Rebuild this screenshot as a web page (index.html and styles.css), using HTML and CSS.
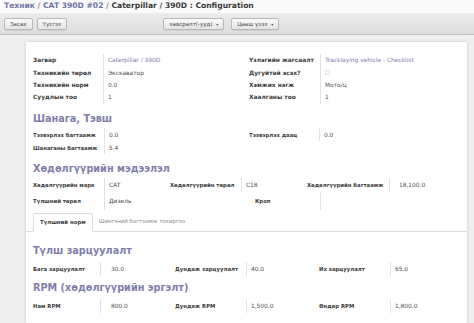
FILE: index.html
```html
<!DOCTYPE html>
<html lang="mn">
<head>
<meta charset="utf-8">
<title>Configuration</title>
<link rel="stylesheet" href="styles.css">
</head>
<body>
<div class="titlebar">
  <a class="crumb">Техник</a><span class="slash"> / </span><a class="crumb">CAT 390D #02</a><span class="slash"> / </span><span class="current">Caterpillar / 390D : Configuration</span>
</div>
<div class="toolbar">
  <div class="btns">
    <button class="btn">Засах</button>
    <button class="btn">Үүсгэх</button>
  </div>
  <div class="btns btns-right">
    <button class="btn">хавсралт(-ууд) <span class="caret">▾</span></button>
    <button class="btn">Цааш үзэх <span class="caret">▾</span></button>
  </div>
</div>
<div class="main">
  <div class="sheet">
    <div class="grid g2 g-first">
      <div class="lbl">Загвар</div><div class="val link">Caterpillar / 390D</div>
      <div class="lbl">Үзлэгийн жагсаалт</div><div class="val link">Tracklaying vehicle - Checklist</div>
      <div class="lbl">Техникийн төрөл</div><div class="val">Экскаватор</div>
      <div class="lbl">Дугуйтай эсэх?</div><div class="val"><span class="checkbox"></span></div>
      <div class="lbl">Техникийн норм</div><div class="val">0.0</div>
      <div class="lbl">Хэмжих нэгж</div><div class="val">Мото/ц</div>
      <div class="lbl">Суудлын тоо</div><div class="val">1</div>
      <div class="lbl">Хаалганы тоо</div><div class="val">1</div>
    </div>

    <h2 class="sep h-1">Шанага, Тэвш</h2>
    <div class="grid g2b">
      <div class="lbl sm">Тээвэрлэх багтаамж</div><div class="val">0.0</div>
      <div class="lbl sm">Тээвэрлэх даац</div><div class="val">0.0</div>
      <div class="lbl sm">Шанаганы багтаамж</div><div class="val">5.4</div>
      <div class="empty"></div><div class="empty"></div>
    </div>

    <h2 class="sep h-2">Хөдөлгүүрийн мэдээлэл</h2>
    <div class="grid g3a">
      <div class="lbl sm">Хөдөлгүүрийн марк</div><div class="val">CAT</div>
      <div class="lbl sm">Хөдөлгүүрийн төрөл</div><div class="val">C18</div>
      <div class="lbl sm">Хөдөлгүүрийн багтаамж</div><div class="val val-wide">18,100.0</div>
    </div>
    <div class="grid g3b">
      <div class="lbl sm">Түлшний төрөл</div><div class="val">Дизель</div>
      <div class="lbl sm lbl-in">Кроп</div><div class="val"></div>
    </div>

    <div class="tabs">
      <div class="tab active">Түлшний норм</div>
      <div class="tab">Шингэний багтаамж тохиргоо</div>
    </div>

    <h2 class="sep h-3">Түлш зарцуулалт</h2>
    <div class="grid g3c">
      <div class="lbl sm">Бага зарцуулалт</div><div class="val val-first">30.0</div>
      <div class="lbl sm">Дундаж зарцуулалт</div><div class="val">40.0</div>
      <div class="lbl sm">Их зарцуулалт</div><div class="val">65.0</div>
    </div>

    <h2 class="sep h-4">RPM (хөдөлгүүрийн эргэлт)</h2>
    <div class="grid g3c">
      <div class="lbl sm">Нам RPM</div><div class="val val-first">800.0</div>
      <div class="lbl sm">Дундаж RPM</div><div class="val">1,500.0</div>
      <div class="lbl sm">Өндөр RPM</div><div class="val">1,800.0</div>
    </div>
  </div>
</div>
</body>
</html>
```
FILE: styles.css
```css
* { box-sizing: border-box; }
html, body { margin: 0; padding: 0; }
body {
  background: #efefef;
  font-family: "DejaVu Sans", Verdana, sans-serif;
  color: #4c4c4c;
  width: 474px;
  height: 323px;
  overflow: hidden;
}
.titlebar {
  height: 13px;
  line-height: 12px;
  padding-left: 4px;
  background: #fafafa;
  font-size: 7.6px;
  font-weight: bold;
  white-space: nowrap;
}
.crumb { color: #6f74a8; }
.slash { color: #8a8a8a; }
.current { color: #3a3a3a; }

.toolbar {
  height: 22px;
  display: flex;
  align-items: center;
  padding-left: 4px;
  background: linear-gradient(#ececec, #dedede);
  border-bottom: 1px solid #c4c4c4;
}
.btns { display: flex; gap: 4px; }
.btns-right { margin-left: 96px; gap: 7px; }
.btn {
  height: 12px;
  padding: 0 5px;
  font-family: "DejaVu Sans", Verdana, sans-serif;
  font-size: 5.5px;
  color: #4c4c4c;
  background: linear-gradient(#fbfbfb, #e4e4e4);
  border: 1px solid #b8b8b8;
  border-radius: 2px;
  box-shadow: 0 1px 1px rgba(0,0,0,0.08);
  line-height: 10px;
}
.caret { font-size: 4px; margin-left: 2px; }

.main { padding: 7px 0 0 26px; }
.sheet {
  width: 441px;
  height: 281px;
  overflow: hidden;
  background: #ffffff;
  box-shadow: 0 0 3px rgba(0,0,0,0.18);
  padding: 12px 7px 0 7px;
}

.grid { display: grid; align-items: stretch; }
.lbl {
  font-weight: bold;
  font-size: 5.9px;
  color: #3c3c3c;
  display: flex;
  align-items: center;
  white-space: nowrap;
}
.lbl.sm { font-size: 5.35px; }
.val {
  border-left: 1px solid #e2e2e2;
  padding-left: 4px;
  font-size: 5.9px;
  display: flex;
  align-items: center;
  white-space: nowrap;
}
.link { color: #7c7bad; }

.g2 { grid-template-columns: 70px 146px 71px 1fr; grid-auto-rows: 12.4px; }
.g2b { grid-template-columns: 71px 145px 70px 1fr; grid-auto-rows: 13px; margin-top: 2.5px; }
.g3a { grid-template-columns: 71px 66px 71px 66px 82px 1fr; grid-auto-rows: 14px; margin-top: 2px; }
.g3b { grid-template-columns: 71px 145px 71px 1fr; grid-auto-rows: 18px; }
.lbl-in { padding-left: 6px; }
.val-wide { padding-left: 9px; }
.g3c { grid-template-columns: 67px 75px 71px 73px 71px 1fr; grid-auto-rows: 14px; margin-top: 4px; }
.val-first { padding-left: 10px; }

.checkbox {
  display: inline-block;
  width: 5px;
  height: 5px;
  border: 1px solid #e0e0e0;
  border-radius: 1px;
}

.sep {
  margin: 0;
  font-size: 9.7px;
  font-weight: bold;
  color: #7f7eab;
  height: 14px;
  line-height: 14px;
  white-space: nowrap;
}
.h-1 { margin-top: 8px; }
.h-2 { margin-top: 7.5px; }
.h-3 { margin-top: 12px; }
.h-4 { margin-top: 5px; }

.tabs {
  display: flex;
  align-items: flex-end;
  height: 19px;
  margin: 3px -7px 0 -7px;
  padding-left: 7px;
  border-bottom: 1px solid #dcdcdc;
}
.tab {
  height: 18px;
  line-height: 17px;
  padding: 0 6px;
  font-size: 5.4px;
  color: #8a8a8a;
  white-space: nowrap;
}
.tab.active {
  color: #3c3c3c;
  font-weight: bold;
  background: #ffffff;
  border: 1px solid #dcdcdc;
  border-bottom: 1px solid #ffffff;
  margin-bottom: -1px;
  height: 19px;
  border-radius: 2px 2px 0 0;
}
```
